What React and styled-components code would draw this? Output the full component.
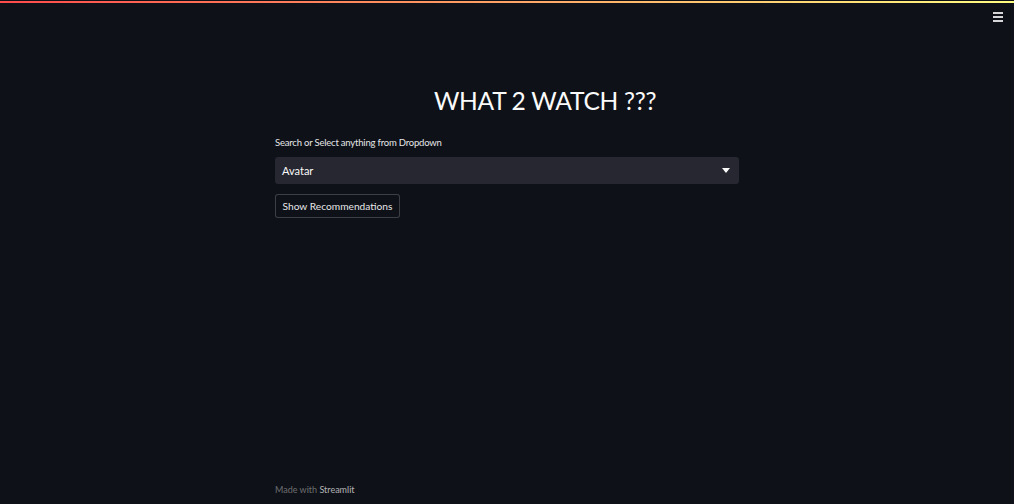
import React from "react";
import styled, { createGlobalStyle } from "styled-components";

const GlobalStyle = createGlobalStyle`
  html, body {
    margin: 0;
    padding: 0;
    background: #0e1117;
  }
  body {
    font-family: "Lato", "Noto Sans", sans-serif;
    color: #fafafa;
  }
`;

const Page = styled.div`
  position: relative;
  min-height: 504px;
  display: flex;
  flex-direction: column;
  background: #0e1117;
  overflow: hidden;
`;

const Decoration = styled.div`
  height: 2px;
  margin-top: 1px;
  background: linear-gradient(90deg, #ff4b4b, #fffd80);
`;

const MenuButton = styled.button`
  position: absolute;
  top: 10px;
  right: 9px;
  width: 14px;
  height: 14px;
  padding: 0;
  border: none;
  background: transparent;
  display: flex;
  flex-direction: column;
  justify-content: center;
  gap: 2.6px;
  align-items: center;

  span {
    display: block;
    width: 10px;
    height: 1.5px;
    background: #d6d6d9;
  }
`;

const Main = styled.main`
  flex: 1;
  width: 464px;
  margin: 0 auto;
  display: flex;
  flex-direction: column;
  padding-top: 81px;
`;

const Title = styled.h1`
  margin: 0;
  text-align: center;
  font-family: "Lato", sans-serif;
  font-weight: 400;
  font-size: 24.6px;
  line-height: 34px;
  letter-spacing: -0.3px;
  padding-left: 76px;
  color: #fafafa;
`;

const Label = styled.label`
  margin-top: 19px;
  font-size: 9.5px;
  line-height: 12px;
  letter-spacing: -0.2px;
  color: #e6e6e8;
`;

const Select = styled.div`
  margin-top: 8px;
  height: 27px;
  border-radius: 3px;
  background: #262730;
  display: flex;
  align-items: center;
  justify-content: space-between;
  padding: 0 9px 0 7px;
  font-size: 11px;
  color: #fafafa;
`;

const Caret = styled.svg`
  width: 8px;
  height: 5px;
`;

const Button = styled.button`
  align-self: flex-start;
  margin-top: 10px;
  height: 24px;
  width: 125px;
  padding: 0;
  border-radius: 3px;
  border: 1px solid rgba(250, 250, 250, 0.2);
  background: #0e1117;
  color: #e6e6e8;
  font-family: "Lato", sans-serif;
  font-size: 10.2px;
`;

const Footer = styled.footer`
  width: 464px;
  margin: 0 auto;
  padding-bottom: 9px;
  font-size: 9px;
  color: rgba(250, 250, 250, 0.4);

  b {
    font-weight: 400;
    color: rgba(250, 250, 250, 0.7);
  }
`;

export default function App() {
  return (
    <Page>
      <GlobalStyle />
      <Decoration />
      <MenuButton aria-label="menu">
        <span />
        <span />
        <span />
      </MenuButton>
      <Main>
        <Title>WHAT 2 WATCH ???</Title>
        <Label>Search or Select anything from Dropdown</Label>
        <Select>
          <span>Avatar</span>
          <Caret viewBox="0 0 8 5">
            <path d="M0 0 H8 L4 5 Z" fill="#fafafa" />
          </Caret>
        </Select>
        <Button>Show Recommendations</Button>
      </Main>
      <Footer>
        Made with <b>Streamlit</b>
      </Footer>
    </Page>
  );
}
